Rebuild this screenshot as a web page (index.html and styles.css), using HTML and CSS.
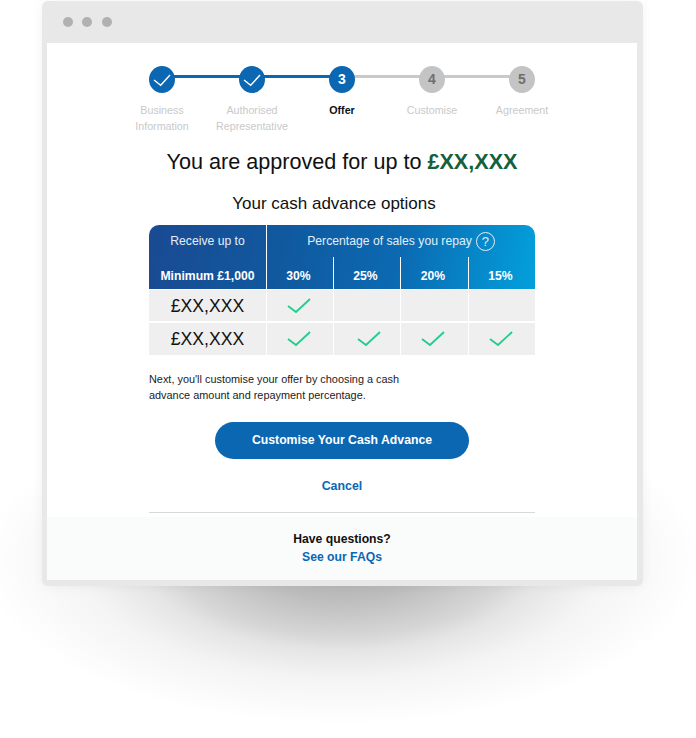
FILE: index.html
```html
<!DOCTYPE html>
<html lang="en">
<head>
    <meta charset="UTF-8">
    <meta name="viewport" content="width=device-width, initial-scale=1.0">
    <title>Cash Advance Offer</title>
    <link rel="stylesheet" href="styles.css">
</head>
<body>
    <div class="stage">
        <div class="floor-shadow"></div>
        <div class="window">
            <div class="titlebar">
                <span class="dot"></span>
                <span class="dot"></span>
                <span class="dot"></span>
            </div>

            <div class="content">
                <div class="steps">
                    <div class="step done">
                        <div class="circle">
                            <svg width="26" height="27" viewBox="0 0 26 27"><polyline points="5,14 11.7,19.3 21,9"/></svg>
                        </div>
                        <p>Business<br>Information</p>
                    </div>
                    <div class="step done">
                        <div class="circle">
                            <svg width="26" height="27" viewBox="0 0 26 27"><polyline points="5,14 11.7,19.3 21,9"/></svg>
                        </div>
                        <p>Authorised<br>Representative</p>
                    </div>
                    <div class="step current">
                        <div class="circle">3</div>
                        <p>Offer</p>
                    </div>
                    <div class="step">
                        <div class="circle">4</div>
                        <p>Customise</p>
                    </div>
                    <div class="step">
                        <div class="circle">5</div>
                        <p>Agreement</p>
                    </div>
                </div>

                <h1>You are approved for up to <strong>£XX,XXX</strong></h1>
                <h2>Your cash advance options</h2>

                <div class="offer-table">
                    <div class="offer-head">
                        <div class="head-title">Receive up to</div>
                        <div class="head-title head-wide">
                            Percentage of sales you repay
                            <span class="help">?</span>
                        </div>
                        <div class="head-label">Minimum £1,000</div>
                        <div class="head-label line">30%</div>
                        <div class="head-label line">25%</div>
                        <div class="head-label line">20%</div>
                        <div class="head-label line">15%</div>
                    </div>
                    <div class="offer-row">
                        <div class="amount">£XX,XXX</div>
                        <div class="cell">
                            <svg class="check nudge-left" width="24" height="16" viewBox="0 0 24 16"><polyline points="1,8 9,14 23,1"/></svg>
                        </div>
                        <div class="cell"></div>
                        <div class="cell"></div>
                        <div class="cell"></div>
                    </div>
                    <div class="offer-row">
                        <div class="amount">£XX,XXX</div>
                        <div class="cell">
                            <svg class="check nudge-left" width="24" height="16" viewBox="0 0 24 16"><polyline points="1,8 9,14 23,1"/></svg>
                        </div>
                        <div class="cell">
                            <svg class="check nudge-right" width="24" height="16" viewBox="0 0 24 16"><polyline points="1,8 9,14 23,1"/></svg>
                        </div>
                        <div class="cell">
                            <svg class="check nudge-left" width="24" height="16" viewBox="0 0 24 16"><polyline points="1,8 9,14 23,1"/></svg>
                        </div>
                        <div class="cell">
                            <svg class="check nudge-left" width="24" height="16" viewBox="0 0 24 16"><polyline points="1,8 9,14 23,1"/></svg>
                        </div>
                    </div>
                </div>

                <p class="note">Next, you'll customise your offer by choosing a cash<br>advance amount and repayment percentage.</p>

                <a href="#" class="btn">Customise Your Cash Advance</a>
                <a href="#" class="cancel">Cancel</a>
                <hr>
            </div>

            <div class="footer">
                <p>Have questions?</p>
                <a href="#">See our FAQs</a>
            </div>
        </div>
    </div>
</body>
</html>
```

FILE: styles.css
```css
body {
    margin: 0;
    background: #fff;
    font-family: "Liberation Sans", Arial, sans-serif;
    color: #111;
}
a {
    color: #0b67b2;
    text-decoration: none;
    font-weight: bold;
}
.stage {
    position: relative;
    width: 696px;
    height: 738px;
    padding: 1px 53px 0 42px;
    box-sizing: border-box;
    overflow: hidden;
}
.floor-shadow {
    position: absolute;
    left: 0;
    top: 420px;
    width: 696px;
    height: 318px;
    background: radial-gradient(ellipse 360px 165px at 342px 140px,
        rgba(0, 0, 0, 0.32) 0%,
        rgba(0, 0, 0, 0.26) 24%,
        rgba(0, 0, 0, 0.16) 46%,
        rgba(0, 0, 0, 0.1) 55%,
        rgba(0, 0, 0, 0.045) 72%,
        rgba(0, 0, 0, 0) 100%);
}
.window {
    position: relative;
    height: 585px;
    box-sizing: border-box;
    display: flex;
    flex-direction: column;
    background: #e8e8e8;
    border-radius: 6px;
    padding: 0 6px 6px 5px;
    box-shadow: 0 0 12px rgba(0, 0, 0, 0.05);
}
.titlebar {
    height: 42px;
    display: flex;
    align-items: center;
    gap: 9.5px;
    padding-left: 15.5px;
    flex-shrink: 0;
}
.dot {
    width: 10px;
    height: 10px;
    border-radius: 50%;
    background: #b1b1b1;
}
.content {
    background: #fff;
    padding: 23px 0 0;
    display: flex;
    flex-direction: column;
    align-items: center;
}

/* stepper */
.steps {
    display: flex;
    width: 450px;
    height: 73px;
}
.step {
    position: relative;
    width: 90px;
    text-align: center;
}
.step:not(:last-child)::after {
    content: "";
    position: absolute;
    left: 45px;
    top: 9px;
    width: 90px;
    height: 3px;
    background: #c9c9c9;
}
.step.done::after {
    background: #0b67b2;
}
.circle {
    position: relative;
    z-index: 1;
    width: 26px;
    height: 27px;
    margin: 0 auto;
    border-radius: 50%;
    background: #c4c4c4;
    color: #6f6f6f;
    font-size: 14px;
    font-weight: bold;
    line-height: 27px;
}
.step.done .circle,
.step.current .circle {
    background: #0b67b2;
    color: #fff;
}
.circle svg {
    display: block;
}
.circle polyline {
    fill: none;
    stroke: #fff;
    stroke-width: 1.4;
}
.step p {
    margin: 10px -8px 0;
    font-size: 10.7px;
    line-height: 15.5px;
    color: #c9c9c9;
}
.step.current p {
    color: #111;
    font-weight: bold;
}

h1 {
    margin: 9px 0 0;
    font-size: 21.6px;
    line-height: 28px;
    font-weight: normal;
    color: #111;
}
h1 strong {
    color: #15603c;
}
h2 {
    margin: 17px 16px 0 0;
    font-size: 17px;
    line-height: 22px;
    font-weight: normal;
}

/* offer table */
.offer-table {
    width: 386px;
    margin-top: 10px;
}
.offer-head,
.offer-row {
    display: grid;
    grid-template-columns: 117px 67px 67px 68px 67px;
}
.offer-head {
    grid-template-rows: 32px 32px;
    border-radius: 10px 10px 0 0;
    background: linear-gradient(100deg, #1a4a92 0%, #10599f 35%, #0b6ab2 65%, #03a0dc 100%);
    color: #fff;
    font-size: 12.2px;
    margin-bottom: 1px;
}
.head-title {
    display: flex;
    align-items: center;
    justify-content: center;
    color: #e4eef7;
}
.head-wide {
    grid-column: 2 / 6;
    gap: 4px;
    border-left: 1px solid #fff;
}
.help {
    width: 17px;
    height: 17px;
    border: 1px solid #e4eef7;
    border-radius: 50%;
    text-align: center;
    line-height: 17px;
    font-size: 13px;
}
.head-label {
    display: flex;
    align-items: center;
    justify-content: center;
    padding-top: 5px;
    box-sizing: border-box;
    font-weight: bold;
}
.line {
    border-left: 1px solid #fff;
    padding-right: 3px;
}
.offer-row {
    height: 31px;
    background: #efefef;
    margin-bottom: 2px;
}
.offer-row:last-child {
    height: 32px;
    margin-bottom: 0;
}
.amount {
    font-size: 17.6px;
    text-align: center;
    line-height: 32px;
    color: #111;
}
.cell {
    display: flex;
    align-items: center;
    justify-content: center;
    border-left: 1px solid #fff;
}
.check polyline {
    fill: none;
    stroke: #1ecf8b;
    stroke-width: 1.8;
}
.nudge-left {
    margin-right: 3px;
}
.nudge-right {
    margin-left: 3px;
}

.note {
    align-self: flex-start;
    margin: 17px 0 0 102px;
    font-size: 10.9px;
    line-height: 15.5px;
    color: #222;
}
.btn {
    margin-top: 19px;
    width: 254px;
    height: 37px;
    border-radius: 19px;
    background: #0b67b2;
    color: #fff;
    font-size: 12.25px;
    line-height: 37px;
    text-align: center;
}
.cancel {
    margin-top: 19px;
    font-size: 12.4px;
    line-height: 16px;
}
hr {
    width: 386px;
    height: 1px;
    margin: 18px 0 4px;
    border: none;
    background: #d8d8d8;
}
.footer {
    flex: 1;
    background: #fafbfb;
    text-align: center;
    font-size: 12.2px;
    line-height: 18px;
    padding-top: 13px;
}
.footer p {
    margin: 0;
    font-weight: bold;
    color: #111;
}
```
